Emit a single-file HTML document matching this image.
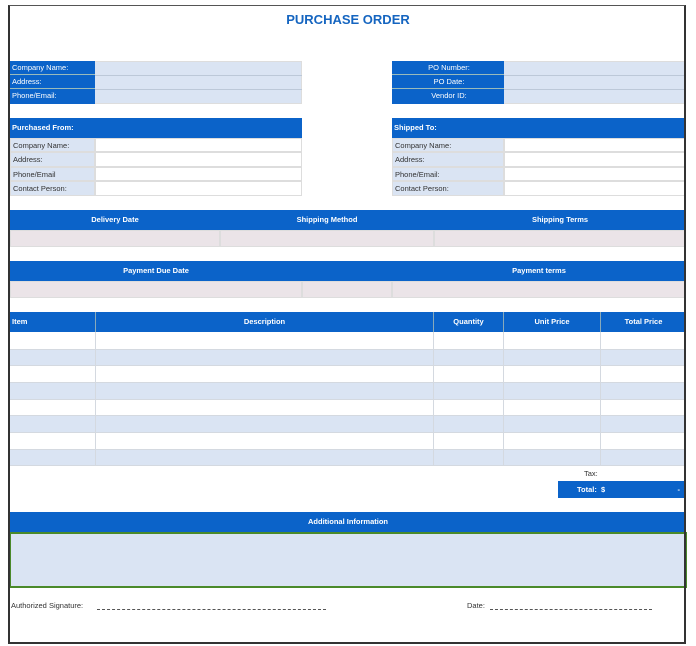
<!DOCTYPE html>
<html><head><style>
*{margin:0;padding:0;box-sizing:border-box}
body{width:696px;height:646px;background:#fff;position:relative;overflow:hidden;font-family:"Liberation Sans",sans-serif;font-size:7.5px;color:#333}
div{position:absolute}
.frame{left:8px;top:5px;width:678px;height:639px;border:2px solid #333;border-top:1px solid #555;z-index:10}
.b{background:#0b63c9;color:#fff}
.l{background:#dae4f3}
.p{background:#ebe4e8}
.c{border:1px solid #ddd}
.t{line-height:14px;padding-left:2px;white-space:nowrap}
.h{font-weight:bold;text-align:center;color:#fff;line-height:20px}
.ln{background:#d4d9e0}
</style></head><body>
<div style="left:0;width:696px;top:12px;text-align:center;font-weight:bold;font-size:13px;color:#1565c0">PURCHASE ORDER</div>

<div class="l c" style="left:10px;top:61px;width:292px;height:43px"></div>
<div class="b t" style="left:10px;top:61px;width:85px;height:14px;border-bottom:1px solid #9bb">Company Name:</div>
<div class="b t" style="left:10px;top:75px;width:85px;height:14px;border-bottom:1px solid #9bb">Address:</div>
<div class="b t" style="left:10px;top:89px;width:85px;height:15px">Phone/Email:</div>
<div style="left:95px;top:75px;width:207px;height:1px;background:#bcc8d8"></div>
<div style="left:95px;top:89px;width:207px;height:1px;background:#bcc8d8"></div>

<div class="l c" style="left:392px;top:61px;width:294px;height:43px"></div>
<div class="b t" style="left:392px;top:61px;width:112px;height:14px;text-align:center;border-bottom:1px solid #9bb">PO Number:</div>
<div class="b t" style="left:392px;top:75px;width:112px;height:14px;text-align:center;border-bottom:1px solid #9bb">PO Date:</div>
<div class="b t" style="left:392px;top:89px;width:112px;height:15px;text-align:center">Vendor ID:</div>
<div style="left:504px;top:75px;width:182px;height:1px;background:#bcc8d8"></div>
<div style="left:504px;top:89px;width:182px;height:1px;background:#bcc8d8"></div>

<div class="b" style="left:10px;top:118px;width:292px;height:20px;font-weight:bold;line-height:20px;padding-left:2px">Purchased From:</div>
<div class="l t c" style="left:10px;top:138px;width:85px;height:14px">Company Name:</div>
<div class="l t c" style="left:10px;top:152px;width:85px;height:15px">Address:</div>
<div class="l t c" style="left:10px;top:167px;width:85px;height:14px">Phone/Email</div>
<div class="l t c" style="left:10px;top:181px;width:85px;height:15px">Contact Person:</div>
<div class="c" style="left:95px;top:138px;width:207px;height:14px"></div>
<div class="c" style="left:95px;top:152px;width:207px;height:15px"></div>
<div class="c" style="left:95px;top:167px;width:207px;height:14px"></div>
<div class="c" style="left:95px;top:181px;width:207px;height:15px"></div>

<div class="b" style="left:392px;top:118px;width:294px;height:20px;font-weight:bold;line-height:20px;padding-left:2px">Shipped To:</div>
<div class="l t c" style="left:392px;top:138px;width:112px;height:14px">Company Name:</div>
<div class="l t c" style="left:392px;top:152px;width:112px;height:15px">Address:</div>
<div class="l t c" style="left:392px;top:167px;width:112px;height:14px">Phone/Email:</div>
<div class="l t c" style="left:392px;top:181px;width:112px;height:15px">Contact Person:</div>
<div class="c" style="left:504px;top:138px;width:182px;height:14px"></div>
<div class="c" style="left:504px;top:152px;width:182px;height:15px"></div>
<div class="c" style="left:504px;top:167px;width:182px;height:14px"></div>
<div class="c" style="left:504px;top:181px;width:182px;height:15px"></div>

<div class="b" style="left:10px;top:210px;width:676px;height:20px"></div>
<div class="h" style="left:10px;top:210px;width:210px">Delivery Date</div>
<div class="h" style="left:220px;top:210px;width:214px">Shipping Method</div>
<div class="h" style="left:434px;top:210px;width:252px">Shipping Terms</div>
<div class="p c" style="left:10px;top:230px;width:210px;height:17px"></div>
<div class="p c" style="left:220px;top:230px;width:214px;height:17px"></div>
<div class="p c" style="left:434px;top:230px;width:252px;height:17px"></div>

<div class="b" style="left:10px;top:261px;width:676px;height:20px"></div>
<div class="h" style="left:10px;top:261px;width:292px">Payment Due Date</div>
<div class="h" style="left:392px;top:261px;width:294px">Payment terms</div>
<div class="p c" style="left:10px;top:281px;width:292px;height:17px"></div>
<div class="p c" style="left:302px;top:281px;width:90px;height:17px"></div>
<div class="p c" style="left:392px;top:281px;width:294px;height:17px"></div>

<div class="b" style="left:10px;top:312px;width:676px;height:20px"></div>
<div class="h" style="left:10px;top:312px;width:85px;text-align:left;padding-left:2px">Item</div>
<div class="h" style="left:95px;top:312px;width:338px;border-left:1px solid #8ab">Description</div>
<div class="h" style="left:433px;top:312px;width:70px;border-left:1px solid #8ab">Quantity</div>
<div class="h" style="left:503px;top:312px;width:97px;border-left:1px solid #8ab">Unit Price</div>
<div class="h" style="left:600px;top:312px;width:86px;border-left:1px solid #8ab">Total Price</div>
<div style="left:10px;top:349px;width:676px;height:16px" class="l"></div>
<div style="left:10px;top:382px;width:676px;height:17px" class="l"></div>
<div style="left:10px;top:415px;width:676px;height:17px" class="l"></div>
<div style="left:10px;top:449px;width:676px;height:16px" class="l"></div>
<div class="ln" style="left:10px;top:349px;width:676px;height:1px"></div>
<div class="ln" style="left:10px;top:365px;width:676px;height:1px"></div>
<div class="ln" style="left:10px;top:382px;width:676px;height:1px"></div>
<div class="ln" style="left:10px;top:399px;width:676px;height:1px"></div>
<div class="ln" style="left:10px;top:415px;width:676px;height:1px"></div>
<div class="ln" style="left:10px;top:432px;width:676px;height:1px"></div>
<div class="ln" style="left:10px;top:449px;width:676px;height:1px"></div>
<div class="ln" style="left:10px;top:465px;width:676px;height:1px"></div>
<div class="ln" style="left:95px;top:332px;width:1px;height:133px"></div>
<div class="ln" style="left:433px;top:332px;width:1px;height:133px"></div>
<div class="ln" style="left:503px;top:332px;width:1px;height:133px"></div>
<div class="ln" style="left:600px;top:332px;width:1px;height:133px"></div>

<div style="left:584px;top:469px">Tax:</div>
<div class="b" style="left:558px;top:481px;width:128px;height:17px;font-weight:bold;line-height:17px">
<span style="position:absolute;left:19px">Total:&nbsp; $</span><span style="position:absolute;right:6px">-</span></div>

<div class="b h" style="left:10px;top:512px;width:676px;height:20px">Additional Information</div>
<div class="l" style="left:9px;top:532px;width:678px;height:56px;border:2px solid #4a8a2a"></div>

<div style="left:11px;top:601px;font-size:7.5px;white-space:nowrap">Authorized Signature:</div>
<div style="left:97px;top:609px;width:229px;height:1px;border-bottom:1px dashed #555"></div>
<div style="left:467px;top:601px;font-size:7.5px;white-space:nowrap">Date:</div>
<div style="left:490px;top:609px;width:162px;height:1px;border-bottom:1px dashed #555"></div>
<div class="frame"></div>
</body></html>
